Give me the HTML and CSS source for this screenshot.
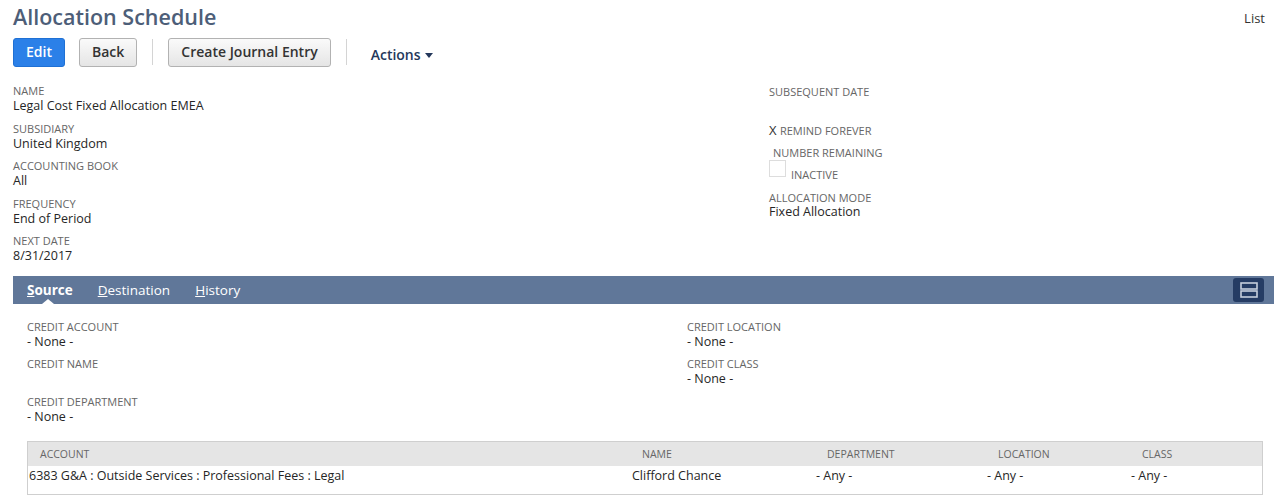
FILE: index.html
```html
<!DOCTYPE html>
<html>
<head>
<meta charset="utf-8">
<link rel="stylesheet" href="styles.css">
</head>
<body>
<div class="page">
  <div class="header">
    <h1 class="title">Allocation Schedule</h1>
    <a class="list-link">List</a>
  </div>
  <div class="toolbar">
    <button class="btn btn-primary">Edit</button>
    <button class="btn">Back</button>
    <span class="sep"></span>
    <button class="btn">Create Journal Entry</button>
    <span class="sep"></span>
    <span class="actions">Actions <span class="caret"></span></span>
  </div>

  <div class="main-fields">
    <div class="col col-left">
      <div class="field"><div class="label">Name</div><div class="value">Legal Cost Fixed Allocation EMEA</div></div>
      <div class="field"><div class="label">Subsidiary</div><div class="value">United Kingdom</div></div>
      <div class="field"><div class="label">Accounting Book</div><div class="value">All</div></div>
      <div class="field"><div class="label">Frequency</div><div class="value">End of Period</div></div>
      <div class="field"><div class="label">Next Date</div><div class="value">8/31/2017</div></div>
    </div>
    <div class="col col-right">
      <div class="field field-first"><div class="label">Subsequent Date</div><div class="value">&nbsp;</div></div>
      <div class="row-remind"><span class="xmark">X</span> <span class="label">Remind Forever</span></div>
      <div class="row-number"><span class="label">Number Remaining</span></div>
      <div class="field-check"><span class="checkbox"></span><span class="label">Inactive</span></div>
      <div class="field field-mode"><div class="label">Allocation Mode</div><div class="value">Fixed Allocation</div></div>
    </div>
  </div>

  <div class="tabbar">
    <div class="tabs">
      <span class="tab active"><u>S</u>ource</span>
      <span class="tab"><u>D</u>estination</span>
      <span class="tab"><u>H</u>istory</span>
    </div>
    <span class="view-btn">
      <svg width="18" height="16" viewBox="0 0 18 16"><rect x="1" y="1" width="16" height="6" fill="none" stroke="#c6cfdd" stroke-width="1.6"/><rect x="1" y="9" width="16" height="6" fill="none" stroke="#c6cfdd" stroke-width="1.6"/></svg>
    </span>
  </div>

  <div class="sub-fields">
    <div class="col sub-left">
      <div class="field"><div class="label">Credit Account</div><div class="value">- None -</div></div>
      <div class="field"><div class="label">Credit Name</div><div class="value">&nbsp;</div></div>
      <div class="field"><div class="label">Credit Department</div><div class="value">- None -</div></div>
    </div>
    <div class="col sub-right">
      <div class="field"><div class="label">Credit Location</div><div class="value">- None -</div></div>
      <div class="field"><div class="label">Credit Class</div><div class="value">- None -</div></div>
    </div>
  </div>

  <div class="table">
    <div class="trow thead">
      <span class="c c-acct">Account</span>
      <span class="c c-name">Name</span>
      <span class="c c-dept">Department</span>
      <span class="c c-loc">Location</span>
      <span class="c c-cls">Class</span>
    </div>
    <div class="trow tbody">
      <span class="c c-acct">6383 G&amp;A : Outside Services : Professional Fees : Legal</span>
      <span class="c c-name">Clifford Chance</span>
      <span class="c c-dept">- Any -</span>
      <span class="c c-loc">- Any -</span>
      <span class="c c-cls">- Any -</span>
    </div>
  </div>
</div>
</body>
</html>
```
FILE: styles.css
```css
* { box-sizing: border-box; }
html, body { margin: 0; padding: 0; background: #fff; }
body { font-family: "Open Sans", "DejaVu Sans", sans-serif; color: #262626; font-size: 13px; }
.page { padding: 0 7px 0 13px; }

.header { display: flex; justify-content: space-between; align-items: flex-start; height: 34px; }
.title { margin: 0; padding-top: 2px; font-size: 21.5px; font-weight: 600; color: #4d5e78; line-height: 30px; }
.list-link { font-size: 13px; color: #333; padding-top: 9px; margin-right: 8px; }

.toolbar { display: flex; align-items: center; height: 30px; margin-top: 3px; }
.btn { font-family: inherit; font-size: 14px; font-weight: 600; height: 29px; padding: 0 12px; border: 1px solid #b2b2b2; border-radius: 3px; background: linear-gradient(#fafafa, #e5e5e5); color: #333; margin-right: 14px; line-height: 26px; }
.btn-primary { background: #2b80e8; border-color: #1f70d4; color: #fff; padding: 0 12px; }
.sep { width: 1px; height: 26px; background: #d4d4d4; margin: 0 15px 0 1px; }
.actions { font-size: 14px; font-weight: 600; color: #24385b; margin-left: 9px; margin-top: 4px; display: flex; align-items: center; }
.caret { display: inline-block; width: 0; height: 0; border-left: 4px solid transparent; border-right: 4px solid transparent; border-top: 5px solid #24385b; margin-left: 4px; margin-top: 2px; }

.main-fields { display: flex; margin-top: 17px; }
.col-left { width: 756px; }
.col-right { flex: 1; }
.field { height: 37.5px; }
.label { font-size: 11px; text-transform: uppercase; color: #666; line-height: 14px; }
.value { font-size: 12.5px; line-height: 16px; color: #262626; }

.field-first { height: 37px; padding-top: 1px; }
.row-remind { height: 18px; line-height: 18px; }
.row-remind .label { line-height: 18px; }
.xmark { font-size: 13px; color: #333; }
.row-number { height: 20px; line-height: 20px; margin-top: 3px; padding-left: 4px; }
.row-number .label { line-height: 20px; }
.field-check { display: flex; align-items: flex-end; height: 17px; margin-top: -2px; }
.checkbox { width: 17px; height: 17px; border: 1px solid #ddd; background: #fff; margin-right: 5px; }
.field-check .label { margin-bottom: -5px; }
.field-mode { margin-top: 14px; }
.field-mode .value { margin-top: -1px; }

.tabbar { display: flex; justify-content: space-between; align-items: center; height: 28px; background: #607799; margin-top: 4px; margin-right: -1px; padding: 0 10px 0 14px; }
.tabs { display: flex; height: 28px; }
.tab { position: relative; color: #fff; font-size: 13.5px; line-height: 28px; margin-right: 25px; }
.tab.active { font-weight: 700; }
.tab.active::after { content: ""; position: absolute; left: 15px; bottom: 0; width: 0; height: 0; border-left: 6px solid transparent; border-right: 6px solid transparent; border-bottom: 5px solid #fff; }
.view-btn { width: 31px; height: 24px; background: #253c64; border-radius: 3px; display: flex; align-items: center; justify-content: center; }

.sub-fields { display: flex; padding-left: 14px; margin-top: 16px; }
.sub-left { width: 660px; }
.sub-right { flex: 1; }

.table { margin: 0 10px 0 14px; border: 1px solid #cfcfcf; margin-top: 9px; }
.trow { display: flex; }
.thead { height: 24px; align-items: center; background: #e5e5e5; font-size: 10.5px; text-transform: uppercase; color: #666; }
.tbody { height: 28px; align-items: flex-start; padding-top: 1px; line-height: 17px; font-size: 12.5px; color: #262626; background: #fff; }
.c { display: block; }
.thead .c-acct { width: 614px; padding-left: 12px; }
.tbody .c-acct { width: 604px; padding-left: 1px; }
.thead .c-name { width: 185px; }
.tbody .c-name { width: 184px; }
.thead .c-dept { width: 171px; }
.tbody .c-dept { width: 171px; }
.thead .c-loc { width: 144px; }
.tbody .c-loc { width: 144px; }
```
